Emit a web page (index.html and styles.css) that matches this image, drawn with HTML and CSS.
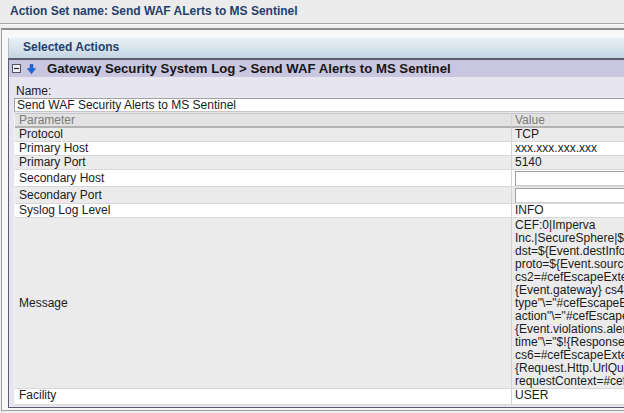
FILE: index.html
```html
<!DOCTYPE html>
<html>
<head>
<meta charset="utf-8">
<title>Action Set</title>
<link rel="stylesheet" href="styles.css">
</head>
<body>
<div class="page">
  <div class="titlebar">Action Set name: Send WAF ALerts to MS Sentinel</div>
  <div class="outer">
    <div class="section-head">Selected Actions</div>
    <div class="action">
      <div class="action-head">
        <svg class="toggle" width="9" height="9" viewBox="0 0 9 9"><rect x="0.5" y="0.5" width="8" height="8" fill="#f3f3f7" stroke="#505066"/><path d="M2 4.5 H7" stroke="#2a2a3a" stroke-width="1.2"/></svg>
        <svg class="arrow" width="9" height="10" viewBox="0 0 9 10"><path d="M3 0.3 H6 V4.5 H8.7 L4.5 9.8 L0.3 4.5 H3 Z" fill="#1d66dc" stroke="#1450b4" stroke-width="0.5"/></svg>
        <span class="action-title">Gateway Security System Log &gt; Send WAF Alerts to MS Sentinel</span>
      </div>
      <div class="action-body">
        <div class="name-label">Name:</div>
        <div class="name-input">Send WAF Security Alerts to MS Sentinel</div>
        <table class="params">
          <thead>
            <tr><th class="param">Parameter</th><th class="val">Value</th></tr>
          </thead>
          <tbody>
            <tr class="g"><td>Protocol</td><td class="val">TCP</td></tr>
            <tr class="w"><td>Primary Host</td><td class="val">xxx.xxx.xxx.xxx</td></tr>
            <tr class="g"><td>Primary Port</td><td class="val">5140</td></tr>
            <tr class="w"><td>Secondary Host</td><td class="val inp"><div class="field"></div></td></tr>
            <tr class="g"><td>Secondary Port</td><td class="val inp"><div class="field"></div></td></tr>
            <tr class="w"><td>Syslog Log Level</td><td class="val">INFO</td></tr>
            <tr class="g msg"><td class="mid">Message</td><td class="val"><div class="lines">CEF:0|Imperva<br>Inc.|SecureSphere|${SecureSphereVersion}|${Alert.alertType}|${Alert.alertMetadata.alertName}|<br>dst=${Event.destInfo.serverIp} dpt=${Event.destInfo.serverPort} duser=${Alert.username}<br>proto=${Event.sourceInfo.ipProtocol} rt=#arcsightDate(${Event.createTime}) cat=${Alert.alertType}<br>cs2=#cefEscapeExtension(${Alert.serverGroupName}) cs2Label=ServerGroup cs3=$!<br>{Event.gateway} cs4=#cefEscapeExtension(${Alert.violationId}) cs4Label=ViolationId<br>type"\="#cefEscapeExtension(${Alert.alertType})" cs5=$!<br>action"\="#cefEscapeExtension(${Alert.immediateAction})" cs5Label=Severity $!<br>{Event.violations.alertSeverity} cs7Label=Reason<br>time"\="$!{Response.responseTime}" cs6Label=Client<br>cs6=#cefEscapeExtension(${Rule.parent.displayName}) request=$!<br>{Request.Http.UrlQueryString} requestMethod=${Request.method}<br>requestContext=#cefEscapeExtension(${Request.Http.Referrer})</div></td></tr>
            <tr class="w last"><td>Facility</td><td class="val">USER</td></tr>
          </tbody>
        </table>
      </div>
    </div>
  </div>
</div>
</body>
</html>
```
FILE: styles.css
```css
html, body {
  margin: 0;
  padding: 0;
  overflow: hidden;
  background: #efefef;
}
body {
  font-family: "Liberation Sans", Arial, Helvetica, sans-serif;
  font-size: 12px;
  color: #1b1b1b;
}
.page {
  width: 1000px;
}
.titlebar {
  height: 19px;
  padding: 4px 0 0 10px;
  font-size: 12px;
  line-height: 14px;
  font-weight: bold;
  color: #243f6c;
  background: #ececec;
  border-bottom: 1px solid #a6a6a6;
  box-shadow: 0 1px 0 #f8f8f8;
}
.outer {
  margin: 4px 0 0 1px;
  border-top: 2px solid #8e8e8e;
  border-left: 1px solid #a0a0a0;
  border-bottom: 1px solid #a0a0a0;
  background: #f6f8f8;
  padding: 8px 0 2px 6px;
}
.section-head {
  height: 20px;
  line-height: 18px;
  padding-left: 14px;
  font-size: 12px;
  font-weight: bold;
  color: #24406e;
  background: linear-gradient(#e8eff4, #d6e3ec 55%, #c3d4e3);
  border-left: 1px solid #b4bcc6;
}
.action {
  border-top: 2px solid #5c5c6c;
  border-left: 1px solid #5c5c70;
  border-bottom: 1px solid #5c5c70;
  background: #e7e5ef;
}
.action-head {
  height: 17px;
  display: flex;
  align-items: center;
  background: #c9c7df;
  padding-left: 3px;
}
.toggle {
  display: block;
  margin-right: 6px;
}
.arrow {
  display: block;
  margin-right: 11px;
}
.action-title {
  font-size: 13.2px;
  font-weight: bold;
  color: #161616;
  line-height: 16px;
}
.action-body {
  padding: 7px 0 2px 5px;
}
.name-label {
  line-height: 14px;
  padding-left: 2px;
}
.name-input {
  height: 12px;
  line-height: 12px;
  padding-left: 2px;
  border: 1px solid;
  border-color: #a2a2a2 #cccccc #c6c6c6 #a2a2a2;
  border-right: none;
  background: #fff;
  margin-bottom: 1px;
}
.params {
  border-collapse: separate;
  border-spacing: 0;
  table-layout: fixed;
  width: 990px;
  border-left: 1px solid #f6f6f6;
}
.params th {
  background: #e2e2e2;
  color: #7a7a7a;
  font-weight: normal;
  text-align: left;
  line-height: 12px;
  padding: 0 0 0 4px;
  border-top: 1px solid #c6c6c6;
  border-bottom: 2px solid #b2b2b2;
}
.params th.param {
  width: 496px;
  box-sizing: border-box;
}
.params td {
  line-height: 13px;
  padding: 0 0 0 4px;
  border-bottom: 1px solid #d8d8d8;
  white-space: nowrap;
  overflow: hidden;
}
.params .val {
  border-left: 1px solid #d4d4d4;
  padding-left: 3px;
}
.params tr.g td {
  background: #ebebeb;
}
.params tr.w td {
  background: #ffffff;
}
.params td.inp {
  padding-top: 1px;
}
.field {
  height: 13px;
  width: 300px;
  border: 1px solid;
  border-color: #a0a0a0 #d0d0d0 #d0d0d0 #a0a0a0;
  background: #fff;
}
.params tr.msg td {
  padding-top: 1px;
  vertical-align: top;
}
.params tr.msg td.mid {
  vertical-align: middle;
}
.lines {
  white-space: nowrap;
}
.params tr.last td {
  padding-bottom: 2px;
}
```
